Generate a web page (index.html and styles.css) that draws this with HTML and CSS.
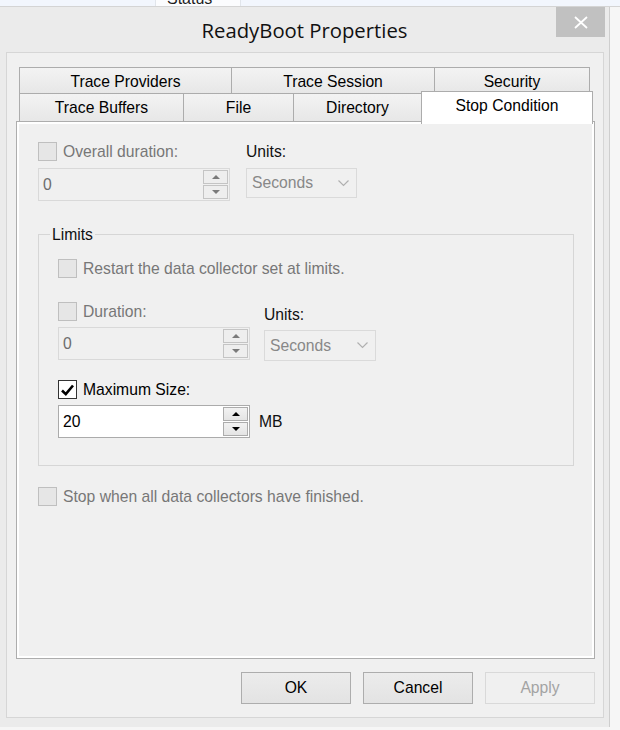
FILE: index.html
```html
<!DOCTYPE html>
<html lang="en">
<head>
    <meta charset="UTF-8">
    <meta name="viewport" content="width=device-width, initial-scale=1.0">
    <title>ReadyBoot Properties</title>
    <link rel="stylesheet" href="styles.css">
</head>
<body>
    <div class="strip">
        <div class="strip-cell">Status</div>
    </div>

    <div class="window">
        <div class="titlebar">
            <div class="title">ReadyBoot Properties</div>
            <div class="close">
                <svg width="14" height="13" viewBox="0 0 14 13"><path d="M1 1 L13 12 M13 1 L1 12" stroke="#fff" stroke-width="1.8" fill="none"/></svg>
            </div>
        </div>

        <div class="client">
            <div class="tabs">
                <div class="tab-row back">
                    <div class="tab t-providers">Trace Providers</div>
                    <div class="tab t-session">Trace Session</div>
                    <div class="tab t-security">Security</div>
                </div>
                <div class="tab-row front">
                    <div class="tab t-buffers">Trace Buffers</div>
                    <div class="tab t-file">File</div>
                    <div class="tab t-directory">Directory</div>
                    <div class="tab t-stop selected">Stop Condition</div>
                </div>
            </div>

            <div class="panel">
                <div class="page">
                    <div class="field-grid">
                        <div class="check disabled"><span class="box"></span>Overall duration:</div>
                        <div class="units">Units:</div>
                        <div class="spin disabled">
                            <span class="spin-value">0</span>
                            <span class="spin-buttons">
                                <span class="spin-btn"><i class="arrow up"></i></span>
                                <span class="spin-btn"><i class="arrow down"></i></span>
                            </span>
                        </div>
                        <div class="combo disabled">Seconds
                            <svg width="11" height="7" viewBox="0 0 11 7"><path d="M0.5 0.5 L5.5 5.5 L10.5 0.5" stroke="#b0b0b0" stroke-width="1.2" fill="none"/></svg>
                        </div>
                    </div>

                    <div class="group">
                        <div class="group-title">Limits</div>

                        <div class="check disabled restart"><span class="box"></span>Restart the data collector set at limits.</div>

                        <div class="field-grid in-group">
                            <div class="check disabled"><span class="box"></span>Duration:</div>
                            <div class="units shifted">Units:</div>
                            <div class="spin disabled">
                                <span class="spin-value">0</span>
                                <span class="spin-buttons">
                                    <span class="spin-btn"><i class="arrow up"></i></span>
                                    <span class="spin-btn"><i class="arrow down"></i></span>
                                </span>
                            </div>
                            <div class="combo disabled shifted">Seconds
                                <svg width="11" height="7" viewBox="0 0 11 7"><path d="M0.5 0.5 L5.5 5.5 L10.5 0.5" stroke="#b0b0b0" stroke-width="1.2" fill="none"/></svg>
                            </div>
                        </div>

                        <div class="check max-size"><span class="box checked">
                            <svg width="15" height="14" viewBox="0 0 15 14"><path d="M2 7.5 L5.8 11.2 L13 2.5" stroke="#000" stroke-width="2.6" fill="none"/></svg>
                        </span>Maximum Size:</div>
                        <div class="size-row">
                            <div class="spin">
                                <span class="spin-value">20</span>
                                <span class="spin-buttons">
                                    <span class="spin-btn"><i class="arrow up"></i></span>
                                    <span class="spin-btn"><i class="arrow down"></i></span>
                                </span>
                            </div>
                            <span class="unit-mb">MB</span>
                        </div>
                    </div>

                    <div class="check disabled stop-row"><span class="box"></span>Stop when all data collectors have finished.</div>
                </div>
            </div>

            <div class="buttons">
                <button class="btn">OK</button>
                <button class="btn">Cancel</button>
                <button class="btn disabled">Apply</button>
            </div>
        </div>
    </div>
</body>
</html>
```

FILE: styles.css
```css
* {
    box-sizing: border-box;
}
body {
    margin: 0;
    width: 620px;
    height: 730px;
    overflow: hidden;
    background: #f6f6f6;
    font-family: "Liberation Sans", Arial, sans-serif;
    font-size: 15.7px;
    color: #000;
}

/* list header behind the dialog */
.strip {
    height: 7px;
    display: flex;
    overflow: hidden;
    background: #f2f6fd;
    border-bottom: 1px solid #d4d4d4;
}
.strip-cell {
    margin-left: 155px;
    margin-top: -9px;
    width: 86px;
    padding-left: 11px;
    line-height: 16px;
    font-size: 16px;
    color: #1e1e1e;
    background: #fbfcfe;
    border-left: 1px solid #e1e5eb;
    border-right: 1px solid #e1e5eb;
}

/* dialog frame */
.window {
    width: 610px;
    height: 720px;
    background: #ebebeb;
    border-right: 1px solid #cecece;
}
.titlebar {
    height: 45px;
    display: grid;
    grid-template-columns: 1fr auto 1fr;
    align-items: center;
}
.title {
    grid-column: 2;
    font-family: "Open Sans", "Liberation Sans", sans-serif;
    font-size: 20.3px;
    color: #111;
    padding-top: 1px;
}
.close {
    grid-column: 3;
    justify-self: end;
    align-self: start;
    width: 49px;
    height: 30px;
    margin-right: 4px;
    background: #c1c1c1;
    display: flex;
    align-items: center;
    justify-content: center;
}
.client {
    margin-left: 6px;
    width: 598px;
    height: 666px;
    background: #f0f0f0;
    border: 1px solid #d6d6d6;
}

/* tabs */
.tabs {
    margin: 14px 0 0 12px;
}
.tab-row {
    display: flex;
}
.tab {
    display: flex;
    align-items: center;
    justify-content: center;
    background: linear-gradient(#f3f3f3, #e7e7e7);
    border: 1px solid #acacac;
    border-bottom: none;
    white-space: nowrap;
}
.tab + .tab {
    margin-left: -1px;
}
.back .tab {
    height: 26px;
    padding-top: 2px;
}
.front {
    height: 28px;
    align-items: flex-end;
}
.front .tab {
    height: 28px;
}
.t-providers { width: 213px; }
.t-session { width: 204px; }
.t-security { width: 156px; }
.t-buffers { width: 165px; }
.t-file { width: 111px; }
.t-directory { width: 129px; }
.t-stop { width: 172px; }
.front .tab.selected {
    height: 33px;
    margin-bottom: -3px;
    padding-bottom: 4px;
    background: #fff;
    position: relative;
    z-index: 2;
}

/* tab page */
.panel {
    margin-left: 9px;
    width: 579px;
    height: 538px;
    border: 1px solid #adadad;
    background: #fff;
    padding: 2px;
}
.page {
    height: 100%;
    background: #f0f0f0;
    padding: 18px 0 0 19px;
}
.field-grid {
    display: grid;
    grid-template-columns: 192px 111px;
    grid-template-rows: 19px 33px;
    column-gap: 16px;
    row-gap: 7px;
}
.field-grid.in-group {
    margin-top: 24px;
    grid-template-columns: 192px 112px;
    column-gap: 14px;
    row-gap: 6px;
}
.shifted {
    margin-top: 3px;
}

.check {
    display: flex;
    align-items: center;
    gap: 6px;
    height: 19px;
    white-space: nowrap;
}
.check.disabled {
    color: #777;
}
.box {
    width: 19px;
    height: 19px;
    flex: none;
    border: 1px solid #bfbfbf;
    background: #e6e6e6;
    display: flex;
    align-items: center;
    justify-content: center;
}
.box.checked {
    border-color: #333;
    background: #fff;
}
.units {
    display: flex;
    align-items: center;
    height: 19px;
    color: #111;
}

.spin {
    display: flex;
    height: 33px;
    background: #fff;
    border: 1px solid #ababab;
}
.spin.disabled {
    background: #f0f0f0;
    border-color: #d9d9d9;
    color: #6d6d6d;
}
.spin-value {
    flex: 1;
    display: flex;
    align-items: center;
    padding-left: 4px;
}
.spin-buttons {
    width: 25px;
    margin: 1px;
    display: flex;
    flex-direction: column;
    gap: 1px;
}
.spin-btn {
    flex: 1;
    display: flex;
    align-items: center;
    justify-content: center;
    border: 1px solid #acacac;
    background: linear-gradient(#f2f2f2, #e4e4e4);
}
.spin.disabled .spin-btn {
    border-color: #c4c4c4;
    background: #eeeeee;
}
.arrow {
    width: 0;
    height: 0;
    border-left: 4px solid transparent;
    border-right: 4px solid transparent;
}
.arrow.up {
    border-bottom: 4px solid #000;
}
.arrow.down {
    border-top: 4px solid #000;
}
.spin.disabled .arrow.up {
    border-bottom-color: #7a7a7a;
}
.spin.disabled .arrow.down {
    border-top-color: #7a7a7a;
}

.combo {
    height: 30px;
    display: flex;
    align-items: center;
    justify-content: space-between;
    padding: 0 7px 0 5px;
    border: 1px solid #dadada;
    background: #f0f0f0;
    color: #888;
}
.in-group .combo {
    height: 31px;
}

/* Limits group */
.group {
    margin-top: 33px;
    width: 536px;
    border: 1px solid #d6d6d6;
    padding: 0 0 27px 19px;
}
.group-title {
    display: table;
    margin: -10px 0 0 -8px;
    padding: 0 2px;
    line-height: 19px;
    background: #f0f0f0;
    color: #111;
}
.restart {
    margin-top: 15px;
}
.max-size {
    margin-top: 20px;
}
.size-row {
    margin-top: 6px;
    display: flex;
    align-items: center;
}
.size-row .spin {
    width: 192px;
}
.unit-mb {
    margin-left: 9px;
    color: #111;
}
.stop-row {
    margin-top: 21px;
}

/* dialog buttons */
.buttons {
    margin-top: 13px;
    padding-right: 8px;
    display: flex;
    justify-content: flex-end;
    gap: 12px;
}
.btn {
    width: 110px;
    height: 32px;
    font-family: "Liberation Sans", Arial, sans-serif;
    font-size: 15.7px;
    color: #000;
    background: linear-gradient(#ececec, #e3e3e3);
    border: 1px solid #adadad;
    padding: 0;
}
.btn.disabled {
    color: #a3a3a3;
    background: #f0f0f0;
    border-color: #d9d9d9;
}
```
